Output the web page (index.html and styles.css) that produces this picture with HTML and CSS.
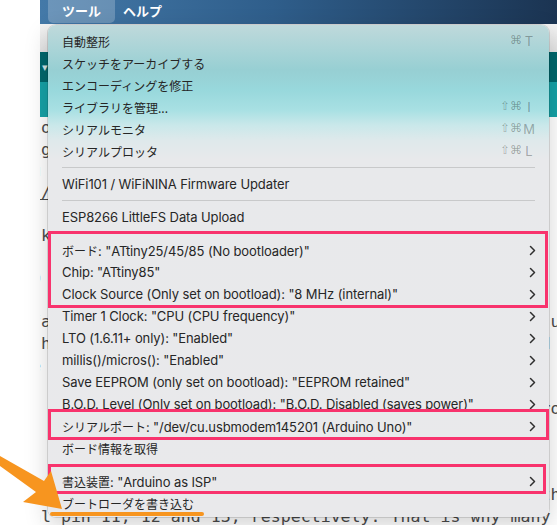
FILE: index.html
```html
<!DOCTYPE html>
<html lang="ja">
<head>
  <meta charset="UTF-8">
  <title>ツール menu</title>
  <link rel="stylesheet" href="styles.css">
</head>
<body>
  <div class="screen">
    <div class="app">
      <div class="menubar">
        <span class="menu-title active">ツール</span>
        <span class="menu-title">ヘルプ</span>
      </div>
      <div class="toolbar"></div>
      <div class="tabs"><span class="tab-arrow">▾ ..</span></div>
      <div class="sketch-head"></div>
<pre class="code">// ArduinoISP
// Copyright (c) 2008-2011 Randall Bohn
// If you require a license, see
// <span class="link">https://opensource.org/licenses/bsd-license.php</span>
//
// This sketch turns the Arduino into a AVRISP. Tiny pins:
//
// Pin 10 is used to reset the target microcontroller.
//
// By default, the hardware SPI pins MISO, MOSI and SCK are used to communicate
// with the target. On all Arduinos, these pins can be found
// on the ICSP/SPI header:
//
//               MISO °. . 5V (!) Avoid this pin on Due, Zero...
//               SCK   . . MOSI
//                     . . GND
//
// On some Arduinos (Uno,...), pins MOSI, MISO and SCK are the same pins as th
// digital pin 11, 12 and 13, respectively. That is why many tutorials instruct
// you to hook up the target to these pins.</pre>
    </div>

    <div class="dropdown">
      <div class="item"><span class="ja">自動整形</span><span class="key"><span class="mods">⌘</span><span class="k">T</span></span></div>
      <div class="item"><span class="ja">スケッチをアーカイブする</span></div>
      <div class="item"><span class="ja">エンコーディングを修正</span></div>
      <div class="item"><span class="ja">ライブラリを管理...</span><span class="key"><span class="mods">⇧⌘</span><span class="k">I</span></span></div>
      <div class="item"><span class="ja">シリアルモニタ</span><span class="key"><span class="mods">⇧⌘</span><span class="k">M</span></span></div>
      <div class="item"><span class="ja">シリアルプロッタ</span><span class="key"><span class="mods">⇧⌘</span><span class="k">L</span></span></div>
      <div class="sep"></div>
      <div class="item"><span>WiFi101 / WiFiNINA Firmware Updater</span></div>
      <div class="sep"></div>
      <div class="item"><span>ESP8266 LittleFS Data Upload</span></div>
      <div class="sep"></div>
      <div class="item"><span><span class="ja">ボード</span>: "ATtiny25/45/85 (No bootloader)"</span><svg class="chev" viewBox="0 0 7 11"><polyline points="1.5,1.5 5.5,5.5 1.5,9.5"/></svg></div>
      <div class="item"><span>Chip: "ATtiny85"</span><svg class="chev" viewBox="0 0 7 11"><polyline points="1.5,1.5 5.5,5.5 1.5,9.5"/></svg></div>
      <div class="item"><span>Clock Source (Only set on bootload): "8 MHz (internal)"</span><svg class="chev" viewBox="0 0 7 11"><polyline points="1.5,1.5 5.5,5.5 1.5,9.5"/></svg></div>
      <div class="item"><span>Timer 1 Clock: "CPU (CPU frequency)"</span><svg class="chev" viewBox="0 0 7 11"><polyline points="1.5,1.5 5.5,5.5 1.5,9.5"/></svg></div>
      <div class="item"><span>LTO (1.6.11+ only): "Enabled"</span><svg class="chev" viewBox="0 0 7 11"><polyline points="1.5,1.5 5.5,5.5 1.5,9.5"/></svg></div>
      <div class="item"><span>millis()/micros(): "Enabled"</span><svg class="chev" viewBox="0 0 7 11"><polyline points="1.5,1.5 5.5,5.5 1.5,9.5"/></svg></div>
      <div class="item"><span>Save EEPROM (only set on bootload): "EEPROM retained"</span><svg class="chev" viewBox="0 0 7 11"><polyline points="1.5,1.5 5.5,5.5 1.5,9.5"/></svg></div>
      <div class="item"><span>B.O.D. Level (Only set on bootload): "B.O.D. Disabled (saves power)"</span><svg class="chev" viewBox="0 0 7 11"><polyline points="1.5,1.5 5.5,5.5 1.5,9.5"/></svg></div>
      <div class="item"><span><span class="ja">シリアルポート</span>: "/dev/cu.usbmodem145201 (Arduino Uno)"</span><svg class="chev" viewBox="0 0 7 11"><polyline points="1.5,1.5 5.5,5.5 1.5,9.5"/></svg></div>
      <div class="item"><span class="ja">ボード情報を取得</span></div>
      <div class="sep"></div>
      <div class="item"><span><span class="ja">書込装置</span>: "Arduino as ISP"</span><svg class="chev" viewBox="0 0 7 11"><polyline points="1.5,1.5 5.5,5.5 1.5,9.5"/></svg></div>
      <div class="item"><span class="ja">ブートローダを書き込む</span></div>
    </div>

    <div class="mark mark-board"></div>
    <div class="mark mark-port"></div>
    <div class="mark mark-isp"></div>

    <svg class="arrow" viewBox="0 0 70 70">
      <polygon points="0,16 44,41 51,31 62,69 23,62 36,52 0,26"/>
    </svg>
    <div class="underline"></div>
  </div>
</body>
</html>
```

FILE: styles.css
```css
html, body {
  margin: 0;
  padding: 0;
  background: #fff;
  width: 557px;
  height: 525px;
  overflow: hidden;
}
.screen {
  position: relative;
  width: 557px;
  height: 525px;
  font-family: "Inter", "Noto Sans CJK JP", sans-serif;
}
.app {
  margin-left: 40px;
  width: 517px;
  height: 525px;
  overflow: hidden;
  display: flex;
  flex-direction: column;
  background: #fff;
}
.menubar {
  flex: none;
  height: 24px;
  display: flex;
  align-items: flex-start;
  padding-left: 8px;
  background: linear-gradient(90deg, #4479a8 0%, #2f5e8b 45%, #1b3452 100%);
}
.menu-title {
  height: 23px;
  line-height: 22px;
  padding: 0 14px;
  color: #fff;
  font-size: 13px;
  font-weight: bold;
  font-family: "Noto Sans CJK JP", sans-serif;
  border-radius: 0 0 5px 5px;
}
.menu-title + .menu-title { padding-left: 8px; }
.menu-title.active { background: rgba(255, 255, 255, 0.22); }
.toolbar {
  flex: none;
  height: 28px;
  background: linear-gradient(#f3f3f3, #e3e3e3);
}
.tabs {
  flex: none;
  height: 30px;
  background: #00676c;
  color: #cfe3e4;
  font-size: 11px;
  line-height: 30px;
  padding-left: 2px;
}
.sketch-head {
  flex: none;
  height: 35px;
  background: #16a2a7;
}
.code {
  margin: 0 0 0 -89px;
  font-family: "DejaVu Sans Mono", monospace;
  font-size: 16.6px;
  line-height: 21.6px;
  color: #4b4b4b;
  white-space: pre;
}
.link { text-decoration: underline; }

.dropdown {
  position: absolute;
  left: 48px;
  top: 25px;
  width: 501px;
  height: 492px;
  box-sizing: border-box;
  padding: 5px 0 3px;
  border-radius: 8px;
  background: linear-gradient(180deg, #bfd9db 0px, #a9d4d7 25px, #97cfd3 45px, #98d8dc 65px, #a8e0e3 85px, #c9e8ea 100px, #dee9eb 115px, #e8e9eb 135px, #e9e9eb 100%);
  box-shadow: 0 0 0 1px rgba(0, 0, 0, 0.12), 0 8px 24px rgba(0, 0, 0, 0.18);
  color: #262626;
  font-size: 13px;
  letter-spacing: -0.1px;
}
.item {
  height: 22px;
  display: flex;
  align-items: center;
  justify-content: space-between;
  padding: 0 14px;
  white-space: nowrap;
}
.ja {
  font-family: "Noto Sans CJK JP", sans-serif;
  font-size: 12px;
  letter-spacing: 0;
}
.key {
  display: flex;
  color: rgba(0, 0, 0, 0.3);
  font-family: "DejaVu Sans", sans-serif;
  font-size: 12px;
}
.key .k {
  width: 12px;
  margin-left: 1px;
  text-align: center;
  font-family: "Inter", sans-serif;
  font-size: 13px;
}
.chev {
  width: 7px;
  height: 11px;
  margin-right: -1px;
  fill: none;
  stroke: #2f2f2f;
  stroke-width: 1.5;
  stroke-linecap: round;
  stroke-linejoin: round;
}
.sep {
  height: 11px;
  display: flex;
  align-items: center;
  padding: 0 14px;
}
.sep::before {
  content: "";
  flex: 1;
  height: 1px;
  background: #c8c9ca;
}

.mark {
  position: absolute;
  left: 48px;
  box-sizing: border-box;
  border: 3px solid #f8336d;
}
.mark-board { top: 231px; width: 500px; height: 77px; }
.mark-port { top: 409px; width: 501px; height: 31px; }
.mark-isp { top: 464px; width: 498px; height: 30px; }

.arrow {
  position: absolute;
  left: 0;
  top: 440px;
  width: 70px;
  height: 70px;
  fill: #f7951f;
}
.underline {
  position: absolute;
  left: 50px;
  top: 512px;
  width: 154px;
  height: 4px;
  border-radius: 2px;
  background: #f7951f;
}
```
